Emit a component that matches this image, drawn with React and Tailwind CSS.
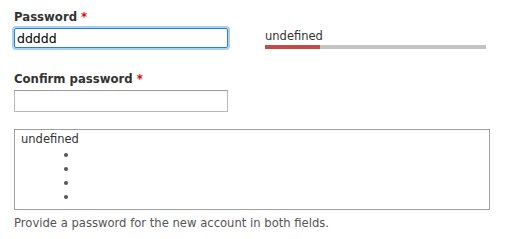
export default function App() {
  return (
    <div className="w-[523px] h-[239px] bg-white text-[#333] font-['DejaVu_Sans',sans-serif] px-[14px] pt-[9px]">
      <div className="flex">
        <div className="w-[214px]">
          <label className="block text-[11.7px] font-bold leading-[16px] mb-[3px] text-[#333]">
            Password <span className="text-[#e00]">*</span>
          </label>
          <input
            type="text"
            defaultValue="ddddd"
            className="block w-[214px] h-[20px] px-[2px] text-[12.5px] text-black border border-[#2a7fc9] rounded-[2px] shadow-[0_0_0_2px_rgba(70,150,220,0.45)] outline-none"
          />
        </div>
        <div className="ml-[37px] pt-[20px] w-[221px]">
          <div className="text-[11.5px] leading-[14px] text-[#333]">undefined</div>
          <div className="h-[4px] bg-[#c3c3c3] mt-[2px]">
            <div className="h-full w-[25%] bg-[#c24a4a]"></div>
          </div>
        </div>
      </div>

      <label className="block text-[11.7px] font-bold leading-[16px] mt-[22px] mb-[3px] text-[#333]">
        Confirm password <span className="text-[#e00]">*</span>
      </label>
      <input
        type="text"
        className="block w-[214px] h-[22px] px-[2px] text-[12.5px] border border-[#b8b8b8] border-t-[#999] outline-none"
      />

      <div className="mt-[17px] w-[476px] h-[81px] border border-[#a0a0a0] px-[6px] pt-[2px] text-[11.5px] leading-[14px] text-[#333]">
        <div>undefined</div>
        <ul className="list-disc pl-[58px] pt-[2px] text-[#555] text-[12.5px]">
          <li className="h-[14px]"></li>
          <li className="h-[14px]"></li>
          <li className="h-[14px]"></li>
          <li className="h-[14px]"></li>
        </ul>
      </div>

      <p className="mt-[6px] text-[11.6px] leading-[14px] text-[#555]">
        Provide a password for the new account in both fields.
      </p>
    </div>
  );
}
